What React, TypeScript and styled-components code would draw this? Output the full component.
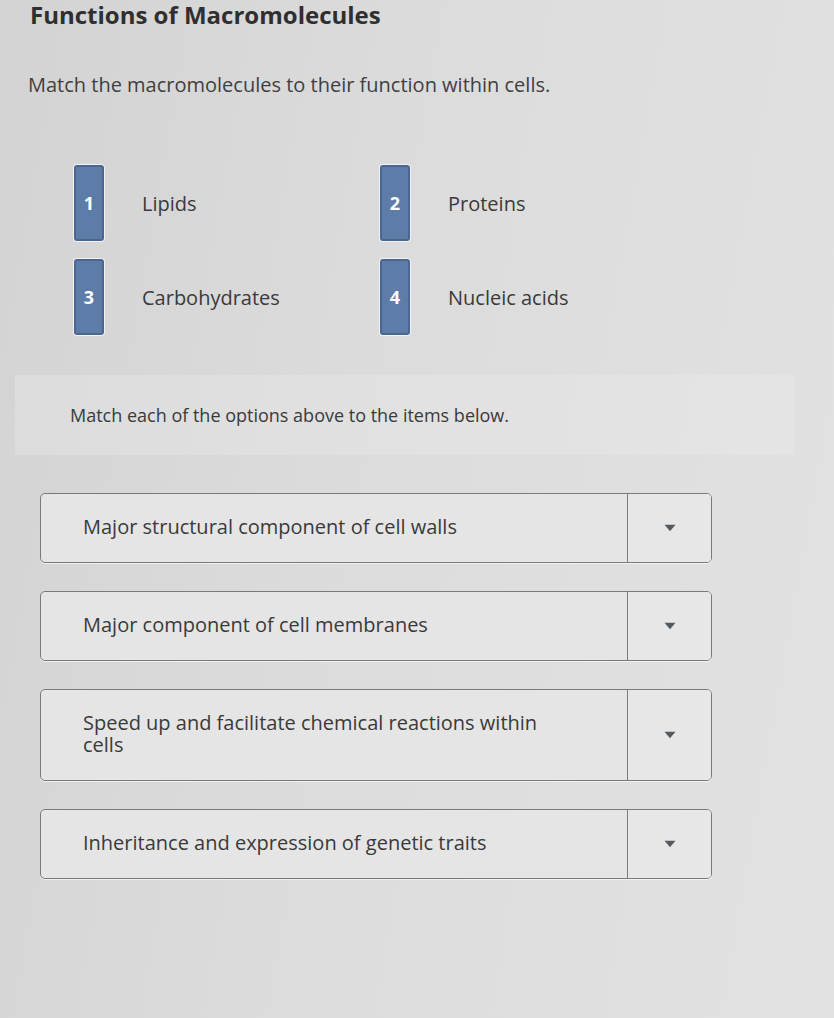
import React from "react";
import styled, { createGlobalStyle } from "styled-components";

const Global = createGlobalStyle`
  html, body {
    margin: 0;
    padding: 0;
  }
  body {
    width: 834px;
    min-height: 1018px;
    background: linear-gradient(100deg, #d3d3d3 0%, #dcdcdc 45%, #e2e2e2 100%);
    font-family: "Open Sans", Lato, "Liberation Sans", sans-serif;
    color: #383838;
  }
`;

const Page = styled.main`
  width: 834px;
  min-height: 1018px;
  box-sizing: border-box;
  padding-top: 2px;
`;

const Title = styled.h1`
  margin: 0;
  padding: 0 0 0 30px;
  font-size: 24px;
  font-weight: 700;
  line-height: 26px;
  color: #2f2f2f;
`;

const Prompt = styled.p`
  margin: 44px 0 0 28px;
  font-size: 20px;
  line-height: 26px;
  color: #404040;
`;

const OptionGrid = styled.div`
  display: grid;
  grid-template-columns: 306px 300px;
  row-gap: 18px;
  margin: 67px 0 0 74px;
`;

const Option = styled.div`
  display: flex;
  align-items: center;
  gap: 38px;
`;

const Badge = styled.div`
  width: 30px;
  height: 76px;
  box-sizing: border-box;
  background: #5e7ca8;
  border: 2px solid #4c678f;
  border-radius: 3px;
  box-shadow: 0 0 0 1px #eef1f5;
  display: flex;
  align-items: center;
  justify-content: center;
  color: #ffffff;
  font-weight: 700;
  font-size: 18px;
`;

const OptionLabel = styled.span`
  font-size: 20px;
  color: #3a3a3a;
`;

const Band = styled.section`
  margin: 40px 39px 0 15px;
  height: 80px;
  background: rgba(236, 236, 236, 0.35);
  display: flex;
  align-items: center;
  padding-left: 55px;
  font-size: 18px;
  color: #3a3a3a;
`;

const Targets = styled.div`
  display: flex;
  flex-direction: column;
  gap: 28px;
  margin: 38px 0 0 40px;
  width: 672px;
`;

const Target = styled.div`
  display: flex;
  min-height: 69px;
  box-sizing: border-box;
  border: 1.5px solid #7a7a7a;
  border-radius: 5px;
  background: #e5e5e5;
  box-shadow: 0 1px 0 rgba(255, 255, 255, 0.6);
`;

const TargetText = styled.div`
  flex: 1;
  display: flex;
  align-items: center;
  padding: 22px 55px 24px 42px;
  font-size: 20px;
  line-height: 22px;
  color: #3a3a3a;
`;

const Picker = styled.button`
  width: 84px;
  flex: none;
  border: none;
  border-left: 1.5px solid #7a7a7a;
  background: #e7e7e7;
  border-radius: 0 4px 4px 0;
  display: flex;
  align-items: center;
  justify-content: center;
  padding: 0;
  cursor: pointer;
`;

const Caret = () => (
  <svg width="12" height="8" viewBox="0 0 12 8">
    <path d="M0.5 0.8 H11.5 L6 7.2 Z" fill="#555a60" />
  </svg>
);

const options = [
  { n: 1, label: "Lipids" },
  { n: 2, label: "Proteins" },
  { n: 3, label: "Carbohydrates" },
  { n: 4, label: "Nucleic acids" },
];

const targets = [
  "Major structural component of cell walls",
  "Major component of cell membranes",
  "Speed up and facilitate chemical reactions within cells",
  "Inheritance and expression of genetic traits",
];

export default function App() {
  return (
    <Page>
      <Global />
      <Title>Functions of Macromolecules</Title>
      <Prompt>Match the macromolecules to their function within cells.</Prompt>
      <OptionGrid>
        {options.map((o) => (
          <Option key={o.n}>
            <Badge>{o.n}</Badge>
            <OptionLabel>{o.label}</OptionLabel>
          </Option>
        ))}
      </OptionGrid>
      <Band>Match each of the options above to the items below.</Band>
      <Targets>
        {targets.map((t) => (
          <Target key={t}>
            <TargetText>{t}</TargetText>
            <Picker aria-label="Choose an option">
              <Caret />
            </Picker>
          </Target>
        ))}
      </Targets>
    </Page>
  );
}
